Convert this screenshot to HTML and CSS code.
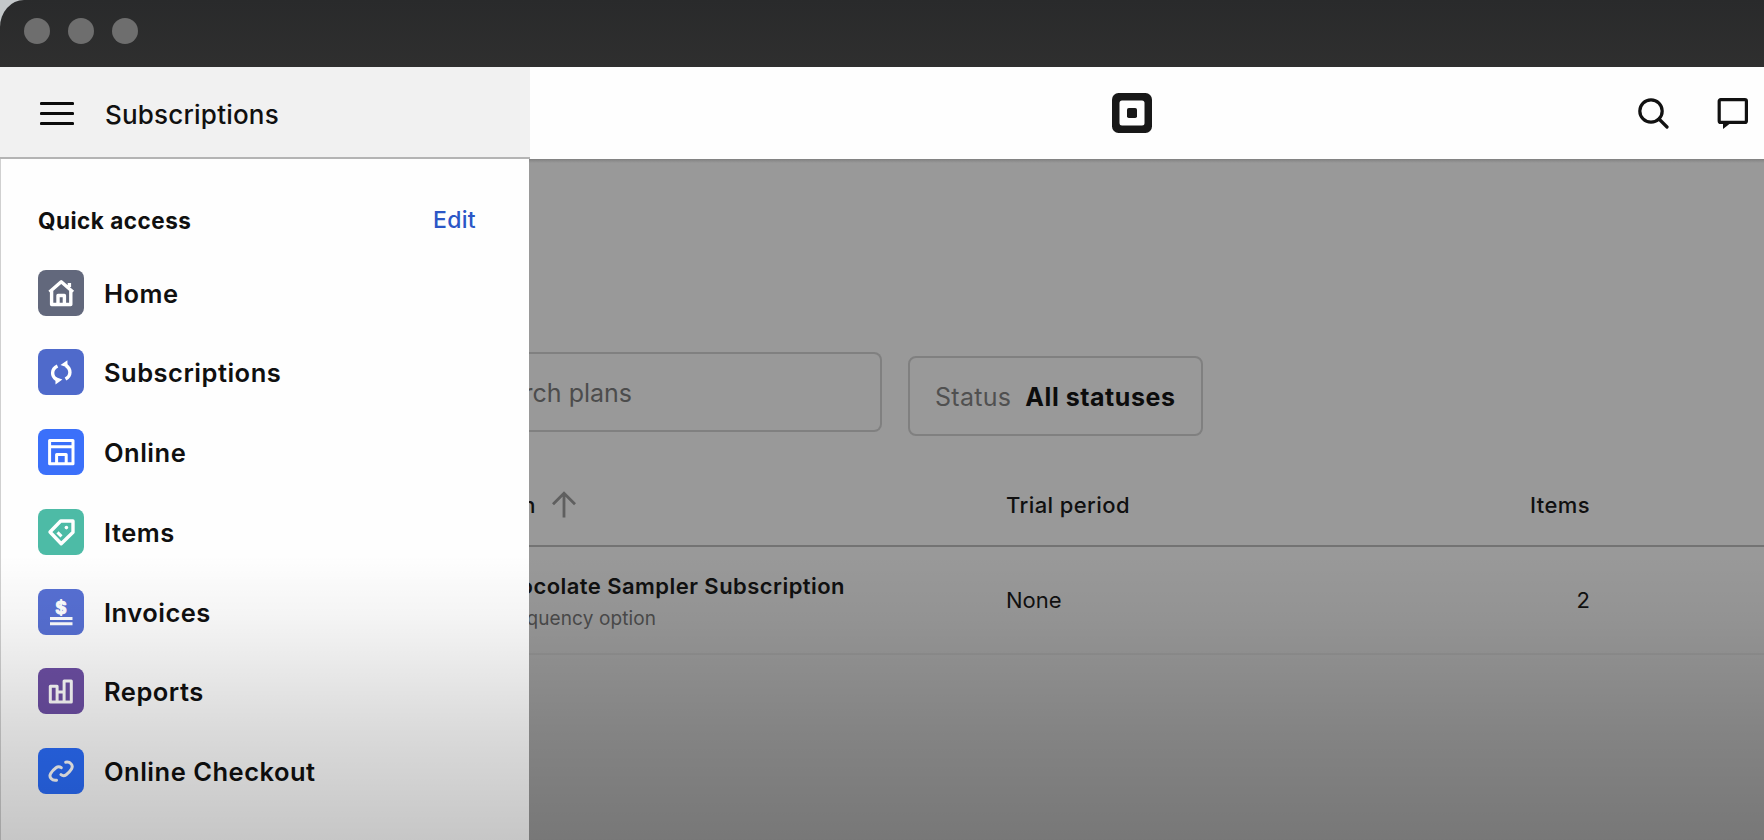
FILE: index.html
```
<!DOCTYPE html>
<html lang="en">
<head>
  <meta charset="UTF-8">
  <meta name="viewport" content="width=device-width, initial-scale=1.0">
  <title>Subscriptions</title>
  <link rel="stylesheet" href="styles.css">
</head>
<body>
  <div class="window">
    <div class="title-bar">
      <span class="dot"></span>
      <span class="dot"></span>
      <span class="dot"></span>
    </div>

    <header class="top-bar">
      <div class="top-left">
        <svg class="menu-icon" viewBox="0 0 34 26" width="34" height="26">
          <path d="M1.5 2.500h31M1.5 12.500h31M1.5 22.500h31" fill="none" stroke="#0b0b0b" stroke-width="3.2" stroke-linecap="round"/>
        </svg>
        <span class="page-name">Subscriptions</span>
      </div>
      <div class="top-right">
        <svg class="logo" viewBox="0 0 40 40" width="40" height="40">
          <rect width="40" height="40" rx="6.5" fill="#181818"/>
          <rect x="7.5" y="7.5" width="25" height="25" rx="2.5" fill="#fff"/>
          <rect x="15" y="15" width="10" height="10" rx="1.8" fill="#181818"/>
        </svg>
        <div class="actions">
          <svg viewBox="0 0 32 32" width="32" height="32" fill="none" stroke="#111" stroke-width="3.2">
            <circle cx="14" cy="14" r="11.2"/>
            <path d="M22 22l8 8" stroke-linecap="round"/>
          </svg>
          <svg viewBox="0 0 32 32" width="32" height="32">
            <rect x="2.2" y="2.6" width="27.2" height="22.8" rx="1.5" fill="none" stroke="#111" stroke-width="3.2"/>
            <path d="M6 25v7l9-7z" fill="#111"/>
          </svg>
        </div>
      </div>
    </header>

    <div class="content">
      <nav class="sidebar">
        <div class="sidebar-head">
          <h2>Quick access</h2>
          <a class="edit">Edit</a>
        </div>
        <ul class="nav-list">
          <li>
            <svg class="nav-icon home" viewBox="0 0 46 46">
              <path d="M11.5 22L23.2 11.8 35 22M13.6 20.5V34.5h19.2V20.5M20 34.5v-9h6.4v9M31.4 17v-4"/>
            </svg>
            <span>Home</span>
          </li>
          <li>
            <svg class="nav-icon subs" viewBox="0 0 46 46">
              <path d="M19.5 17C13.200 20 13.200 27 18.500 30.500M27.500 30C33.300 27 33.300 20.200 28 16.500"/>
              <path class="solid" d="M22.500 16L29.400 11.300 29.600 18.600zM24.400 30.600L17.500 35.500 17.400 28z"/>
            </svg>
            <span>Subscriptions</span>
          </li>
          <li>
            <svg class="nav-icon online" viewBox="0 0 46 46">
              <path class="thin" d="M11.6 11.4h23.4v23.4H11.6zM11.6 17.8h23.4M18.6 34.5v-9h9.6v9"/>
            </svg>
            <span>Online</span>
          </li>
          <li>
            <svg class="nav-icon items" viewBox="0 0 46 46">
              <path d="M12 23L22.7 12h12.3v11.3L23.2 34.7z"/>
              <path class="thin" d="M19.5 23.4l4 4"/>
              <circle class="solid" cx="28.4" cy="18.6" r="1.8"/>
            </svg>
            <span>Items</span>
          </li>
          <li>
            <svg class="nav-icon invoices" viewBox="0 0 46 46">
              <text x="23" y="24.5" class="dollar">$</text>
              <path class="thin" d="M12 29.5h22.500M12 34.8h22.500"/>
            </svg>
            <span>Invoices</span>
          </li>
          <li>
            <svg class="nav-icon reports" viewBox="0 0 46 46">
              <path class="thin" d="M12.3 18.2h6.8v15.8h-6.8zM19.1 24h7v10h-7zM26.1 13h7.2v21h-7.2z"/>
            </svg>
            <span>Reports</span>
          </li>
          <li>
            <svg class="nav-icon checkout" viewBox="0 0 46 46">
              <path class="thin" d="M18.500 32.200c-4.500.8-8-3-5.800-6.800 1.200-2 3.300-4.200 5.300-5.700 1.700-1.300 3.700-1.200 5.200 0M27.700 14.200c4.500-.8 8 3 5.800 6.800-1.200 2-3.300 4.200-5.300 5.700-1.700 1.300-3.700 1.200-5.200 0"/>
            </svg>
            <span>Online Checkout</span>
          </li>
        </ul>
      </nav>

      <main class="plans">
        <div class="filters">
          <div class="search"><span>Search plans</span></div>
          <div class="status">Status <b>All statuses</b></div>
        </div>
        <div class="row table-head">
          <div class="plan-cell">
            <span class="clip">Plan</span>
            <svg viewBox="0 0 26 28" width="26" height="28" fill="none" stroke="#5f5f5f" stroke-width="2.8">
              <path d="M13 26.5V2.5M2 13.2L13 2.2l11 11"/>
            </svg>
          </div>
          <div class="trial-cell">Trial period</div>
          <div class="count-cell">Items</div>
        </div>
        <div class="row table-row">
          <div class="plan-cell">
            <div class="plan-name">Chocolate Sampler Subscription</div>
            <div class="plan-note">1 frequency option</div>
          </div>
          <div class="trial-cell">None</div>
          <div class="count-cell">2</div>
        </div>
      </main>
    </div>
    <div class="fade"></div>
  </div>
</body>
</html>
```
FILE: styles.css
```
* {
    box-sizing: border-box;
}

body {
    margin: 0;
    background: #c4c8ca;
    font-family: Inter, "Liberation Sans", sans-serif;
    color: #101010;
}

.window {
    position: relative;
    display: flex;
    flex-direction: column;
    height: 840px;
    overflow: hidden;
    border-top-left-radius: 24px 27px;
}

.title-bar {
    display: flex;
    flex: none;
    gap: 18px;
    height: 67px;
    padding: 18px 24px;
    background: linear-gradient(#292a2b, #2f2f2f);
}

.dot {
    width: 26px;
    height: 26px;
    border-radius: 50%;
    background: #6e6e6e;
}

.top-bar {
    display: flex;
    flex: none;
    height: 92px;
    background: #fefefe;
}

.top-left {
    display: flex;
    align-items: center;
    width: 530px;
    padding: 4px 0 0 40px;
    background: #f1f1f1;
    border-bottom: 2px solid #b4b4b4;
}

.page-name {
    margin-left: 31px;
    font-size: 26px;
    font-weight: 500;
    letter-spacing: 0.2px;
}

.top-right {
    display: flex;
    flex: 1;
    align-items: center;
    justify-content: space-between;
    padding: 0 15px 0 582px;
}

.actions {
    display: flex;
    gap: 48px;
}

.content {
    display: flex;
    flex: 1;
    min-height: 0;
}

.sidebar {
    flex: none;
    width: 529px;
    padding: 45px 53px 0 37px;
    background: #fefefe;
    border-left: 1px solid #d0d0d0;
}

.sidebar-head {
    display: flex;
    justify-content: space-between;
    align-items: center;
    height: 32px;
}

.sidebar-head h2 {
    margin: 0;
    font-size: 22.5px;
    font-weight: 700;
    letter-spacing: 0.5px;
}

.edit {
    color: #2b56c6;
    font-size: 23px;
    font-weight: 500;
    letter-spacing: 0.3px;
}

.nav-list {
    display: flex;
    flex-direction: column;
    gap: 33.8px;
    margin: 0;
    padding: 33.500px 0 0;
    list-style: none;
}

.nav-list li {
    display: flex;
    align-items: center;
    gap: 20px;
    height: 46px;
    font-size: 25.5px;
    font-weight: 600;
    letter-spacing: 0.5px;
}

.nav-list span {
    padding-top: 1px;
}

.nav-icon {
    width: 46px;
    height: 46px;
    border-radius: 8px;
    fill: none;
    stroke: #fff;
    stroke-width: 3.4;
    stroke-linejoin: round;
}

.nav-icon .thin {
    stroke-width: 3;
}

.nav-icon .solid {
    fill: #fff;
    stroke: none;
}

.home { background: #62687c; }
.subs { background: #4f6acb; }
.online { background: #3b70fa; }
.items { background: #4dbba6; }
.invoices { background: #5770d4; }
.reports { background: #6d4fa4; }
.checkout { background: #2b6dfb; stroke-linecap: round; }

.dollar {
    fill: #fff;
    stroke: #fff;
    stroke-width: 0.9;
    font-size: 17.5px;
    font-weight: 700;
    letter-spacing: 0;
    text-anchor: middle;
}

.plans {
    flex: 1;
    min-width: 0;
    overflow: hidden;
    background: linear-gradient(#808080, #999 4px);
}

.filters {
    display: flex;
    gap: 26px;
    padding-top: 193px;
}

.search {
    display: flex;
    justify-content: flex-end;
    align-items: center;
    width: 353px;
    height: 80px;
    padding: 2px 248px 0 0;
    border: 2px solid #808080;
    border-left: 0;
    border-radius: 0 8px 8px 0;
    color: #4c4c4c;
    font-size: 25px;
    white-space: nowrap;
}

.status {
    display: flex;
    align-items: center;
    gap: 14px;
    width: 295px;
    height: 80px;
    margin-top: 4px;
    padding: 2px 0 0 25px;
    border: 2px solid #808080;
    border-radius: 8px;
    color: #505050;
    font-size: 25px;
    letter-spacing: 0.3px;
}

.status b {
    color: #0c0c0c;
    font-weight: 700;
    letter-spacing: 0.55px;
}

.row {
    display: grid;
    grid-template-columns: 477px 300px 1fr;
    align-items: center;
    font-size: 22px;
}

.table-head {
    height: 111px;
    padding-top: 29px;
    border-bottom: 2px solid #737373;
    font-weight: 500;
    letter-spacing: 0.4px;
}

.table-head .plan-cell {
    display: flex;
    align-items: center;
    gap: 15px;
}

.clip {
    display: flex;
    justify-content: flex-end;
    width: 7px;
}

.table-row {
    height: 108px;
    border-bottom: 2px solid #929292;
}

.table-row .plan-cell {
    display: flex;
    flex-direction: column;
    align-items: flex-end;
    width: 316px;
    padding-top: 2px;
    white-space: nowrap;
}

.plan-name {
    font-weight: 600;
    letter-spacing: 0.45px;
}

.plan-note {
    margin-top: 8px;
    margin-right: 189px;
    color: #4b4b4b;
    font-size: 19px;
    letter-spacing: 0.1px;
}

.count-cell {
    padding-right: 174px;
    text-align: right;
}

/* darkens the lower part of the window */
.fade {
    position: absolute;
    inset: 555px 0 0;
    background: linear-gradient(rgba(0, 0, 0, 0), rgba(0, 0, 0, 0.04) 22%, rgba(0, 0, 0, 0.14) 62%, rgba(0, 0, 0, 0.22));
}
```
